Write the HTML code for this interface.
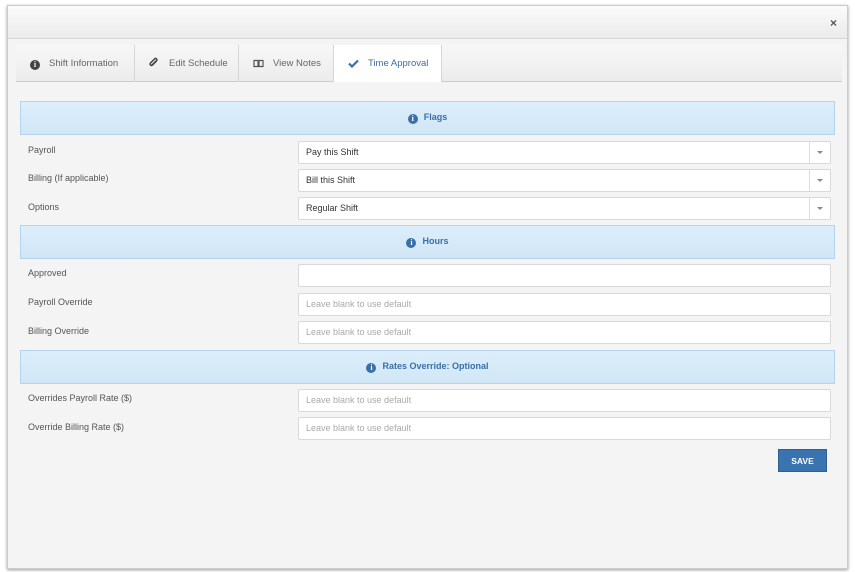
<!DOCTYPE html>
<html><head><style>
*{box-sizing:border-box;margin:0;padding:0}
body{width:855px;height:572px;background:#fff;font-family:"Liberation Sans",sans-serif;position:relative;overflow:hidden;font-size:9px;color:#444}
.modal{position:absolute;left:7px;top:5px;width:841px;height:564px;background:#f4f4f4;border:1px solid #ccc;box-shadow:0 1px 3px rgba(0,0,0,.4)}
.hdr{position:absolute;left:0;top:0;right:0;height:33px;background:linear-gradient(#fbfbfb,#ebebeb);border-bottom:1px solid #d4d4d4}
.x{position:absolute;right:10px;top:10px;font-size:12px;font-weight:bold;color:#555}
.tabs{position:absolute;left:8px;top:39px;width:826px;height:37px;background:linear-gradient(#f7f7f7,#ececec);border-bottom:1px solid #ccc}
.tab{position:absolute;top:0;height:37px;line-height:37px;color:#666;border-right:1px solid #d6d6d6;padding-left:14px;font-size:9.5px}
.tab.act{background:#fff;color:#3a6fa8;border-left:1px solid #d6d6d6}
.tab svg{vertical-align:-2px;margin-right:9px}
.bar{position:absolute;left:12px;width:815px;height:34px;background:linear-gradient(#dceefb,#d1e6f6);border:1px solid #b5d3ec;text-align:center;line-height:31px;color:#3a6fa8;font-weight:bold;font-size:9px}
.ic{display:inline-block;width:10px;height:10px;border-radius:50%;background:#3a6fa8;color:#fff;font-size:8px;line-height:10px;text-align:center;font-weight:bold;margin-right:6px;vertical-align:-1px;font-family:"Liberation Serif",serif}
.lbl{position:absolute;left:20px;font-size:9px;color:#555}
.inp{position:absolute;left:290px;width:533px;height:23px;background:#fff;border:1px solid #d8d8d8;border-radius:2px;line-height:21px;padding-left:7px;font-size:9px;color:#333}
.ph{color:#aaa}
.sel:after{content:"";position:absolute;right:0;top:0;width:20px;height:21px;border-left:1px solid #ddd}
.sel:before{content:"";position:absolute;right:7px;top:9px;border-left:3px solid transparent;border-right:3px solid transparent;border-top:3px solid #888}
.save{position:absolute;left:770px;top:443px;width:49px;height:23px;background:#3a74b0;color:#fff;font-weight:bold;font-size:8.5px;text-align:center;line-height:23px;border:1px solid #2d5f92}
</style></head><body>
<div class="modal">
<div class="hdr"><span class="x">×</span></div>
<div class="tabs">
<div class="tab" style="left:0;width:119px"><span class="ic" style="background:#444;margin-right:9px">i</span>Shift Information</div>
<div class="tab" style="left:119px;width:104px"><svg width="11" height="11" viewBox="0 0 11 11"><path d="M2 9 L8 3 A1.5 1.5 0 0 0 6 1.5 L1.5 6 A1.2 1.2 0 0 0 3.5 8 L7.5 4" fill="none" stroke="#444" stroke-width="1.5"/></svg>Edit Schedule</div>
<div class="tab" style="left:223px;width:95px"><svg width="11" height="9" viewBox="0 0 11 9"><path d="M1 1.5 H5 V7.5 H1 Z M6 1.5 H10 V7.5 H6 Z" fill="none" stroke="#555" stroke-width="1.2"/></svg>View Notes</div>
<div class="tab act" style="left:317px;width:109px"><svg width="11" height="9" viewBox="0 0 11 9"><path d="M1 4.5 L4 7.5 L10 1.5" fill="none" stroke="#3a6fa8" stroke-width="2.2"/></svg>Time Approval</div>
</div>
<div class="bar" style="top:95px"><span class="ic">i</span>Flags</div>
<div class="lbl" style="top:139px">Payroll</div>
<div class="inp sel" style="top:135px">Pay this Shift</div>
<div class="lbl" style="top:167px">Billing (If applicable)</div>
<div class="inp sel" style="top:163px">Bill this Shift</div>
<div class="lbl" style="top:196px">Options</div>
<div class="inp sel" style="top:191px">Regular Shift</div>
<div class="bar" style="top:219px"><span class="ic">i</span>Hours</div>
<div class="lbl" style="top:262px">Approved</div>
<div class="inp" style="top:258px"></div>
<div class="lbl" style="top:291px">Payroll Override</div>
<div class="inp ph" style="top:287px">Leave blank to use default</div>
<div class="lbl" style="top:320px">Billing Override</div>
<div class="inp ph" style="top:315px">Leave blank to use default</div>
<div class="bar" style="top:344px"><span class="ic">i</span>Rates Override: Optional</div>
<div class="lbl" style="top:387px">Overrides Payroll Rate ($)</div>
<div class="inp ph" style="top:383px">Leave blank to use default</div>
<div class="lbl" style="top:416px">Override Billing Rate ($)</div>
<div class="inp ph" style="top:411px">Leave blank to use default</div>
<div class="save">SAVE</div>
</div>
</body></html>
